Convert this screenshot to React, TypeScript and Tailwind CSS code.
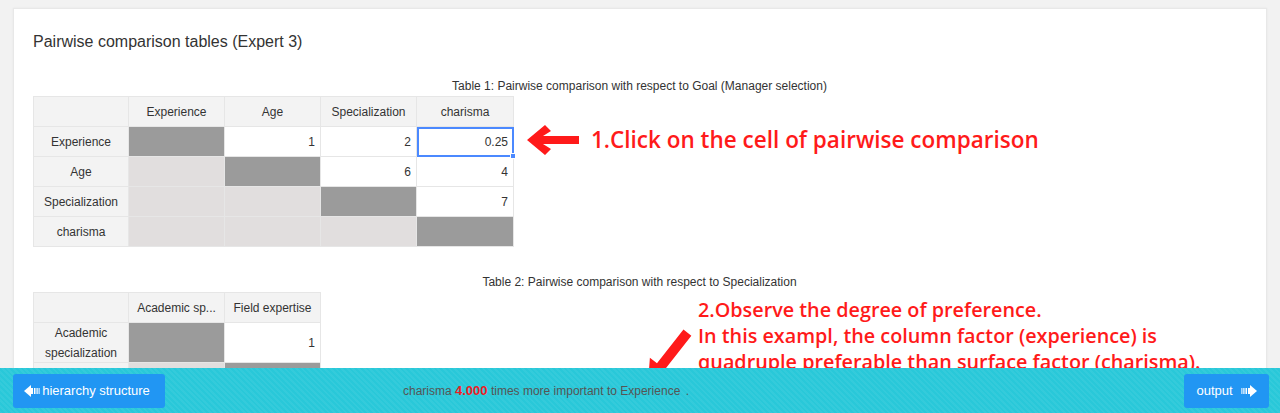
import React from "react";

const F = { fontFamily: '"Liberation Sans", Arial, sans-serif' };
const RED = { fontFamily: '"Open Sans", "Noto Sans", sans-serif' };

function Cell({ kind, children, className = "" }: { kind: "head" | "dark" | "light" | "white"; children?: React.ReactNode; className?: string }) {
  const base = "border-r border-b border-[#e6e6e6] text-[12px] text-[#333] flex items-center ";
  const k =
    kind === "head"
      ? "bg-[#f3f3f3] justify-center text-center"
      : kind === "dark"
      ? "bg-[#9b9b9b]"
      : kind === "light"
      ? "bg-[#e1dede]"
      : "bg-white justify-end pr-[5px]";
  return <div className={base + k + " " + className}>{children}</div>;
}

function LeftArrow() {
  return (
    <svg width="52" height="32" viewBox="0 0 52 32">
      <polygon points="0,16 18,1 24,7 16,12 52,12 52,20 16,20 24,25 18,31" fill="#ff1a1a" />
    </svg>
  );
}

function DiagArrow() {
  return (
    <svg width="70" height="70" viewBox="0 0 70 70" className="absolute left-[597px] top-[29px]">
      <g transform="translate(18,62) rotate(-52)">
        <polygon points="0,0 21,-14 21,-5 64,-5 64,5 21,5 21,14" fill="#ff1a1a" />
      </g>
    </svg>
  );
}

function StripeLeft() {
  return (
    <svg width="16" height="12" viewBox="0 0 16 12" className="mr-[2px]">
      <polygon points="0,6 7,0 7,12" fill="white" />
      <rect x="7" y="3" width="2" height="6" fill="white" />
      <rect x="10" y="3" width="1.5" height="6" fill="white" />
      <rect x="12.5" y="3" width="1.2" height="6" fill="white" />
      <rect x="14.6" y="3" width="1" height="6" fill="white" />
    </svg>
  );
}

function StripeRight() {
  return (
    <svg width="16" height="12" viewBox="0 0 16 12" className="ml-[8px]">
      <rect x="0.4" y="3" width="1" height="6" fill="white" />
      <rect x="2.3" y="3" width="1.2" height="6" fill="white" />
      <rect x="4.5" y="3" width="1.5" height="6" fill="white" />
      <rect x="7" y="3" width="2" height="6" fill="white" />
      <polygon points="16,6 9,0 9,12" fill="white" />
    </svg>
  );
}

export default function App() {
  return (
    <div className="min-h-[413px] bg-[#f2f2f2] pt-[8px] px-[13px]" style={F}>
      <div className="bg-white border border-[#e8e8e8] shadow-[0_0_2px_rgba(0,0,0,0.06)] pt-[23px] pl-[19px] pr-[20px] pb-[40px]">
        <h1 className="text-[16px] leading-[20px] text-[#333]">Pairwise comparison tables (Expert 3)</h1>

        <div className="mt-[26px] text-center text-[12px] leading-[16px] text-[#333]">
          Table 1: Pairwise comparison with respect to Goal (Manager selection)
        </div>
        <div className="mt-[2px] flex items-start">
          <div className="grid grid-cols-[95px_96px_96px_96px_97px] auto-rows-[30px] border-l border-t border-[#e6e6e6]">
            <Cell kind="head" />
            <Cell kind="head">Experience</Cell>
            <Cell kind="head">Age</Cell>
            <Cell kind="head">Specialization</Cell>
            <Cell kind="head">charisma</Cell>

            <Cell kind="head">Experience</Cell>
            <Cell kind="dark" />
            <Cell kind="white">1</Cell>
            <Cell kind="white">2</Cell>
            <div className="relative bg-white border-2 border-[#4b89ff] text-[12px] text-[#333] flex items-center justify-end pr-[4px]">
              0.25
              <div className="absolute right-[-4px] bottom-[-4px] w-[6px] h-[6px] bg-[#4b89ff] border border-white" />
            </div>

            <Cell kind="head">Age</Cell>
            <Cell kind="light" />
            <Cell kind="dark" />
            <Cell kind="white">6</Cell>
            <Cell kind="white">4</Cell>

            <Cell kind="head">Specialization</Cell>
            <Cell kind="light" />
            <Cell kind="light" />
            <Cell kind="dark" />
            <Cell kind="white">7</Cell>

            <Cell kind="head">charisma</Cell>
            <Cell kind="light" />
            <Cell kind="light" />
            <Cell kind="light" />
            <Cell kind="dark" />
          </div>
          <div className="ml-[13px] mt-[28px]">
            <LeftArrow />
          </div>
          <div className="ml-[12px] mt-[29px] text-[22.5px] leading-[30px] font-semibold text-[#ff1a1a]" style={RED}>
            1.Click on the cell of pairwise comparison
          </div>
        </div>

        <div className="mt-[27px] text-center text-[12px] leading-[16px] text-[#333]">
          Table 2: Pairwise comparison with respect to Specialization
        </div>
        <div className="relative mt-[2px] flex items-start">
          <div className="grid grid-cols-[95px_96px_96px] grid-rows-[30px_40px_30px] border-l border-t border-[#e6e6e6]">
            <Cell kind="head" />
            <Cell kind="head">Academic sp...</Cell>
            <Cell kind="head">Field expertise</Cell>

            <Cell kind="head" className="leading-[20px]">Academic<br />specialization</Cell>
            <Cell kind="dark" />
            <Cell kind="white">1</Cell>

            <Cell kind="head">Field expertise</Cell>
            <Cell kind="light" />
            <Cell kind="dark" />
          </div>
          <DiagArrow />
          <div className="ml-[377px] mt-[5px] text-[19.8px] leading-[26px] font-semibold text-[#ff1a1a]" style={RED}>
            <div>2.Observe the degree of preference.</div>
            <div>In this exampl, the column factor (experience) is</div>
            <div>quadruple preferable than surface factor (charisma).</div>
          </div>
        </div>
      </div>

      <div className="fixed left-0 right-0 bottom-0 h-[45px] bg-[#29c8d9] bg-[repeating-linear-gradient(45deg,rgba(255,255,255,0.05)_0px,rgba(255,255,255,0.05)_2px,transparent_2px,transparent_4px)] flex items-center pl-[13px] pr-[11px]">
        <button className="h-[34px] w-[152px] rounded-[3px] bg-[#2196f3] text-white text-[13px] flex items-center justify-center pr-[4px]">
          <StripeLeft />
          hierarchy structure
        </button>
        <div className="ml-[238px] text-[12px] text-[#555]">
          charisma <span className="text-[#ee1c25] font-bold text-[13px]">4.000</span> times more important to Experience <span className="ml-[2px]">.</span>
        </div>
        <div className="flex-1" />
        <button className="h-[34px] w-[85px] rounded-[3px] bg-[#2196f3] text-white text-[13px] flex items-center justify-center">
          output
          <StripeRight />
        </button>
      </div>
    </div>
  );
}
